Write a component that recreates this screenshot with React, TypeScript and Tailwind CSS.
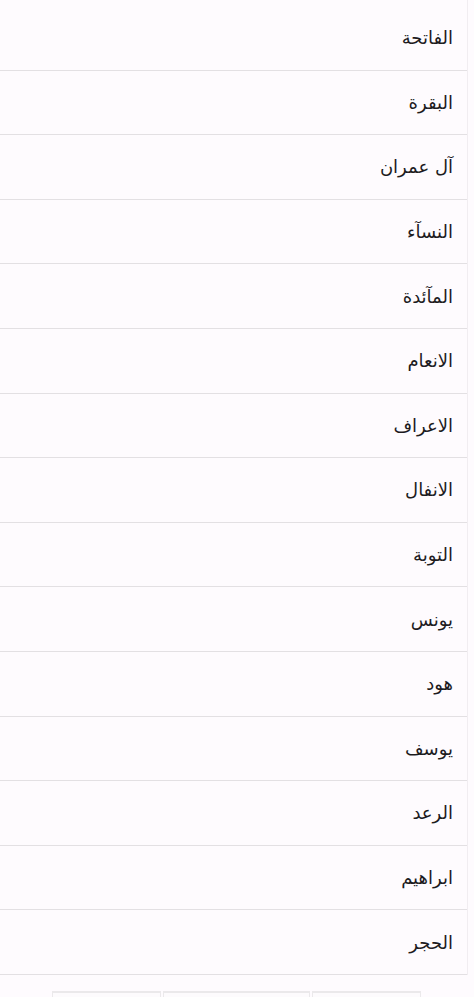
const SURAHS = [
  'الفاتحة',
  'البقرة',
  'آل عمران',
  'النسآء',
  'المآئدة',
  'الانعام',
  'الاعراف',
  'الانفال',
  'التوبة',
  'يونس',
  'هود',
  'يوسف',
  'الرعد',
  'ابراهيم',
  'الحجر',
]

export default function App() {
  return (
    <div
      className="h-[997px] overflow-hidden bg-[#fefbfe] text-[#1d1b1e]"
      style={{ fontFamily: "'DejaVu Sans', 'Noto Sans', sans-serif" }}
    >
      <div className="pt-[6px] border-r border-[#f1edf1] mr-[6px]">
        {SURAHS.map((name) => (
          <div
            key={name}
            dir="rtl"
            className="h-[64.6px] flex items-center pr-[14px] border-b-[1.5px] border-[#e3e0e3] text-[18px]"
          >
            {name}
          </div>
        ))}
      </div>

      {/* bottom bar peeking in */}
      <div className="flex justify-start pl-[52px] gap-[2px] mt-[16px]">
        <div className="w-[109px] h-[20px] border-t-2 border-x border-[#ebe9eb] bg-[#fdfbfd]" />
        <div className="w-[147px] h-[20px] border-t-2 border-x border-[#ebe9eb] bg-[#fdfbfd]" />
        <div className="w-[109px] h-[20px] border-t-2 border-x border-[#ebe9eb] bg-[#fdfbfd]" />
      </div>
    </div>
  )
}
